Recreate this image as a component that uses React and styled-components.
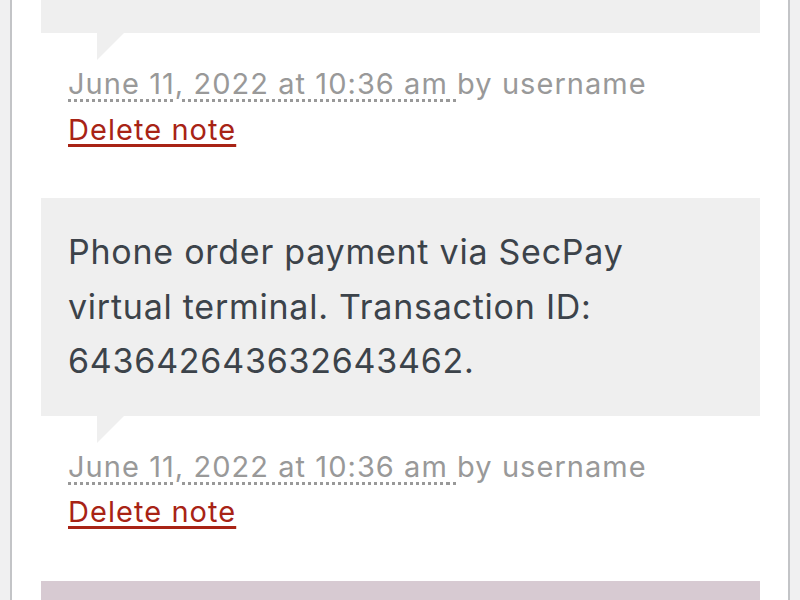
import React from 'react';
import styled, { createGlobalStyle } from 'styled-components';

const GlobalStyle = createGlobalStyle`
  html, body {
    margin: 0;
    padding: 0;
    background: #f0f0f1;
    overflow: hidden;
  }
  body {
    font-family: Inter, "Liberation Sans", sans-serif;
    color: #3c434a;
  }
`;

const Page = styled.div`
  height: 600px;
  overflow: hidden;
  padding: 0 10px;
`;

const Panel = styled.div`
  background: #fff;
  border-left: 2px solid #c3c4c7;
  border-right: 2px solid #c3c4c7;
  height: 600px;
  overflow: hidden;
  padding: 0 28px 0 29px;
`;

const NoteList = styled.ul`
  list-style: none;
  margin: -75.5px 0 0;
  padding: 0;
`;

const Note = styled.li`
  margin: 0 0 19px;
`;

const NoteContent = styled.div`
  position: relative;
  background: ${({ $system }) => ($system ? '#d7cad2' : '#efefef')};
  padding: 27px;
  font-size: 34px;
  line-height: 54.5px;
  letter-spacing: 0.75px;
  color: #3c434a;

  p {
    margin: 0;
  }

  &::after {
    content: "";
    position: absolute;
    left: 56px;
    bottom: -27px;
    width: 0;
    height: 0;
    border-width: 27px 27px 0 0;
    border-style: solid;
    border-color: ${({ $system }) => ($system ? '#d7cad2' : '#efefef')} transparent;
  }
`;

const Meta = styled.p`
  margin: 0;
  padding: 28px 27px 27px;
  font-size: 29px;
  line-height: 45.5px;
  letter-spacing: 1.05px;
  color: #999;
`;

const ExactDate = styled.abbr`
  text-decoration: underline dotted;
  text-decoration-thickness: 3px;
  text-underline-offset: 5px;
`;

const DeleteLink = styled.a`
  color: #a82315;
  text-decoration: underline;
  text-decoration-thickness: 3px;
  text-underline-offset: 4px;
`;

const notes = [
  { id: 1, text: 'Order status changed.', date: 'June 11, 2022 at 10:36 am', by: 'username' },
  {
    id: 2,
    text: 'Phone order payment via SecPay virtual terminal. Transaction ID: 643642643632643462.',
    date: 'June 11, 2022 at 10:36 am',
    by: 'username',
  },
  { id: 3, text: 'Order status changed from Pending payment to Processing.', system: true },
];

const App = () => (
  <>
    <GlobalStyle />
    <Page>
      <Panel>
        <NoteList>
          {notes.map((n) => (
            <Note key={n.id}>
              <NoteContent $system={n.system}>
                <p>{n.text}</p>
              </NoteContent>
              {n.date && (
                <Meta>
                  <ExactDate title="2022-06-11 10:36:00">{n.date} </ExactDate>
                  by {n.by}
                  <br />
                  <DeleteLink href="#" role="button">Delete note</DeleteLink>
                </Meta>
              )}
            </Note>
          ))}
        </NoteList>
      </Panel>
    </Page>
  </>
);

export default App;
